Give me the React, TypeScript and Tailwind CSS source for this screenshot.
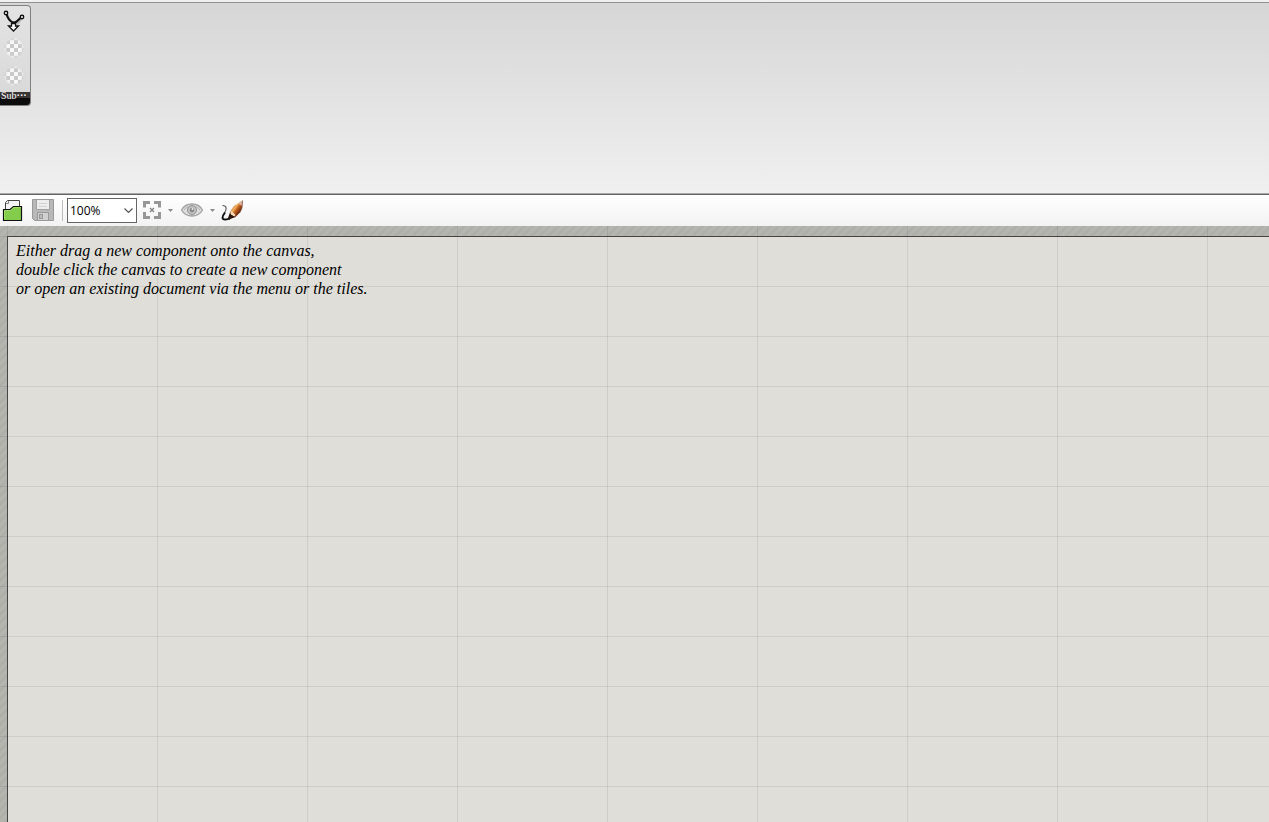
import React, { useState } from 'react';

const ZOOM_LEVELS = ['50%', '75%', '100%', '150%', '200%'];

const SubCurveIcon: React.FC = () => (
  <svg width="24" height="24" viewBox="0 0 24 24" fill="none" aria-hidden="true">
    <path d="M5 6C7 11 10 16 14 16C18 16 18 11 21 10" stroke="#888" strokeOpacity="0.4" strokeWidth="2" />
    <path d="M4 5C6 11 9 14.500 12 14.500C16 14.500 17 10 20 9" stroke="#111" strokeWidth="2.200" />
    <path d="M9.500 15.500h4v2.500h3l-5 5L6.500 18h3z" fill="#fff" stroke="#111" strokeWidth="1.300" />
    <circle cx="4" cy="5" r="1.700" fill="#fff" stroke="#111" strokeWidth="1.400" />
    <circle cx="20" cy="9" r="1.700" fill="#fff" stroke="#111" strokeWidth="1.400" />
  </svg>
);

const EmptySlotIcon: React.FC<{ id: string }> = ({ id }) => (
  <svg width="24" height="24" viewBox="0 0 24 24" aria-hidden="true">
    <defs>
      <pattern id={`${id}-checks`} width="8" height="8" patternUnits="userSpaceOnUse">
        <rect width="8" height="8" fill="#f8f8f8" />
        <rect width="4" height="4" fill="#c9c9c9" />
        <rect x="4" y="4" width="4" height="4" fill="#c9c9c9" />
      </pattern>
      <radialGradient id={`${id}-fade`}>
        <stop offset="0.600" stopColor="#fff" />
        <stop offset="1" stopColor="#fff" stopOpacity="0" />
      </radialGradient>
      <mask id={`${id}-mask`}>
        <circle cx="12" cy="12" r="10.500" fill={`url(#${id}-fade)`} />
      </mask>
    </defs>
    <rect width="24" height="24" fill={`url(#${id}-checks)`} mask={`url(#${id}-mask)`} />
  </svg>
);

const OpenIcon: React.FC = () => (
  <svg width="24" height="24" viewBox="0 0 24 24" aria-hidden="true">
    <path d="M5.500 13V3.500L7.500 1.500H19.500V13z" fill="#f4f4f6" stroke="#444" />
    <path d="M8.500 2v2.500H6" fill="none" stroke="#888" />
    <path d="M3.500 10.500H10L13.500 7.500H21.500V21.500H3.500z" fill="#84cc4c" stroke="#111" strokeWidth="1.200" />
    <path d="M4.500 20V11.500H10.500L14 8.500H20.500" fill="none" stroke="#9cdb66" />
  </svg>
);

const SaveIcon: React.FC = () => (
  <svg width="24" height="24" viewBox="0 0 24 24" aria-hidden="true">
    <path d="M1.500 0.500H22.500V21.500H3.500L1.500 19.500z" fill="#b8b8b8" stroke="#999" />
    <path d="M5.500 1V10.500H18.500V1" fill="#ededed" stroke="#a2a2a2" />
    <path d="M8 4.500h8M8 7.500h8" stroke="#d2d2d2" />
    <path d="M6.500 21V13.500H17.500V21" fill="#d0d0d0" stroke="#999" />
    <rect x="8.500" y="15.500" width="3" height="4" fill="#bbb" stroke="#999" />
  </svg>
);

const ZoomExtentsIcon: React.FC = () => (
  <svg width="24" height="24" viewBox="0 0 24 24" fill="none" aria-hidden="true">
    <path
      d="M4.500 8.500V3.500H10M14 3.500H19.500V8.500M19.500 13V18.500H14M10 18.500H4.500V13"
      stroke="#979797"
      strokeWidth="3"
    />
    <path d="M10 9l4 4M14 9l-4 4" stroke="#888" strokeWidth="1.500" />
  </svg>
);

const EyeIcon: React.FC = () => (
  <svg width="24" height="24" viewBox="0 0 24 24" aria-hidden="true">
    <path d="M1.500 11C6 3 18 3 22.500 11C18 19 6 19 1.500 11z" fill="#dcdcdc" stroke="#a4a4a4" strokeWidth="1.300" />
    <path d="M4 11C7 6 17 6 20 11" fill="none" stroke="#b0b0b0" />
    <circle cx="12" cy="11" r="4.500" fill="#c0c0c0" stroke="#949494" />
    <circle cx="12" cy="11" r="2.200" fill="#858585" />
    <circle cx="12.500" cy="10" r="1" fill="#eee" />
  </svg>
);

const SketchIcon: React.FC = () => (
  <svg width="24" height="24" viewBox="0 0 24 24" aria-hidden="true">
    <defs>
      <linearGradient id="brush" x1="0.200" y1="0.200" x2="0.800" y2="0.800">
        <stop offset="0.100" stopColor="#b9551b" />
        <stop offset="0.350" stopColor="#f3b765" />
        <stop offset="0.550" stopColor="#c4621f" />
        <stop offset="0.900" stopColor="#5c2108" />
      </linearGradient>
    </defs>
    <path d="M2.500 6.500C7 6.500 7 10 4.500 14" fill="none" stroke="#555" strokeWidth="1.100" />
    <path d="M5 13.500C1.500 18 2 20.500 5 20.500C7 20.500 8 20 10 19.500" fill="none" stroke="#111" strokeWidth="2" />
    <path d="M10.500 12L14 7L22.500 1.500L22 9L20 13.500L15.500 18L9.500 19z" fill="url(#brush)" />
    <path d="M10.500 12L10.500 15L15.500 18L9 20.500L8 19z" fill="#29150d" />
    <path d="M10.500 12L12.500 13L15.500 16L14.500 17.500L11 15.500z" fill="#f6dfb8" />
    <path d="M17.500 4.500L22.500 1.500L22.500 7z" fill="#dcb59c" />
    <path d="M22.500 1.500L22 9L20 13.500" fill="none" stroke="#8a5a52" strokeWidth="0.800" />
  </svg>
);

const DropArrow: React.FC = () => (
  <svg width="5" height="3" viewBox="0 0 5 3" aria-hidden="true">
    <path d="M0 0H5L2.500 3z" fill="#8a8a8a" />
  </svg>
);

const Ribbon: React.FC = () => (
  <header className="h-[195px] pt-[2px] bg-[#f0f0f0] border-b border-[#636363]">
    <div className="h-full border-t border-b border-t-[#909090] border-b-[#a8a8a8] bg-linear-to-b from-[#d6d6d6] to-[#f0f0f0] pt-[2px]">
      <section className="flex flex-col w-[31px] h-[101px] rounded-r-[4px] border border-l-0 border-[#808080] bg-linear-to-b from-[#e3e3e3] to-[#d8d8d8] overflow-hidden">
        <div className="flex flex-col gap-1 flex-1 pt-[2px] pl-[2px]">
          <button type="button" aria-label="Sub curve">
            <SubCurveIcon />
          </button>
          <EmptySlotIcon id="slot-a" />
          <EmptySlotIcon id="slot-b" />
        </div>
        <h2 className="h-[13px] pl-px bg-linear-to-b from-[#3a3535] from-50% to-[#0c0c0c] to-50% text-white text-[10px] leading-[8px] whitespace-nowrap font-['Liberation_Serif',serif]">
          Sub<b>···</b>
        </h2>
      </section>
    </div>
  </header>
);

const Toolbar: React.FC = () => {
  const [zoom, setZoom] = useState('100%');

  return (
    <div role="toolbar" className="flex items-center h-[31px] bg-linear-to-b from-white to-[#f2f2f2]">
      <button type="button" aria-label="Open">
        <OpenIcon />
      </button>
      <button type="button" aria-label="Save" className="ml-[7px]">
        <SaveIcon />
      </button>
      <span className="w-px h-[21px] ml-[7px] bg-[#bdbdbd]" />
      <div className="relative ml-1">
        <select
          aria-label="Zoom"
          value={zoom}
          onChange={(e) => setZoom(e.target.value)}
          className="block appearance-none w-[70px] h-[25px] pl-[2px] border border-[#666] bg-white text-[12px] text-black font-['Open_Sans',sans-serif]"
        >
          {ZOOM_LEVELS.map((level) => (
            <option key={level}>{level}</option>
          ))}
        </select>
        <svg
          className="absolute right-[4px] top-[10px] pointer-events-none"
          width="9"
          height="6"
          viewBox="0 0 9 6"
          fill="none"
          aria-hidden="true"
        >
          <path d="M0.500 0.500L4.500 4.500L8.500 0.500" stroke="#555" strokeWidth="1.200" />
        </svg>
      </div>
      <button type="button" aria-label="Zoom extents" className="flex items-center gap-1 ml-[3px]">
        <ZoomExtentsIcon />
        <DropArrow />
      </button>
      <button type="button" aria-label="Preview" className="flex items-center gap-[6px] ml-[7px]">
        <EyeIcon />
        <DropArrow />
      </button>
      <button type="button" aria-label="Sketch" className="ml-[5px]">
        <SketchIcon />
      </button>
    </div>
  );
};

const Canvas: React.FC = () => (
  <main className="relative flex flex-col flex-1 pt-[10px] pl-[7px] bg-[repeating-linear-gradient(135deg,#b5b5b0_0px,#b5b5b0_3px,#afafaa_4px,#afafaa_6px)]">
    <div className="flex-1 border-t border-l border-[#4c4a4a] bg-[#dfded9] pt-[4px] pl-2">
      <p className="text-[16px] leading-[19px] italic text-black font-['Liberation_Serif',serif]">
        Either drag a new component onto the canvas,
        <br />
        double click the canvas to create a new component
        <br />
        or open an existing document via the menu or the tiles.
      </p>
    </div>
    {/* Grid lines run over the page and its margin */}
    <div className="absolute inset-0 pointer-events-none bg-[linear-gradient(to_right,#00000014_1px,transparent_1px),linear-gradient(to_bottom,#00000014_1px,transparent_1px)] bg-size-[150px_50px] bg-position-[7px_10px]" />
  </main>
);

export default function App() {
  return (
    <div className="flex flex-col min-h-screen">
      <Ribbon />
      <Toolbar />
      <Canvas />
    </div>
  );
}
